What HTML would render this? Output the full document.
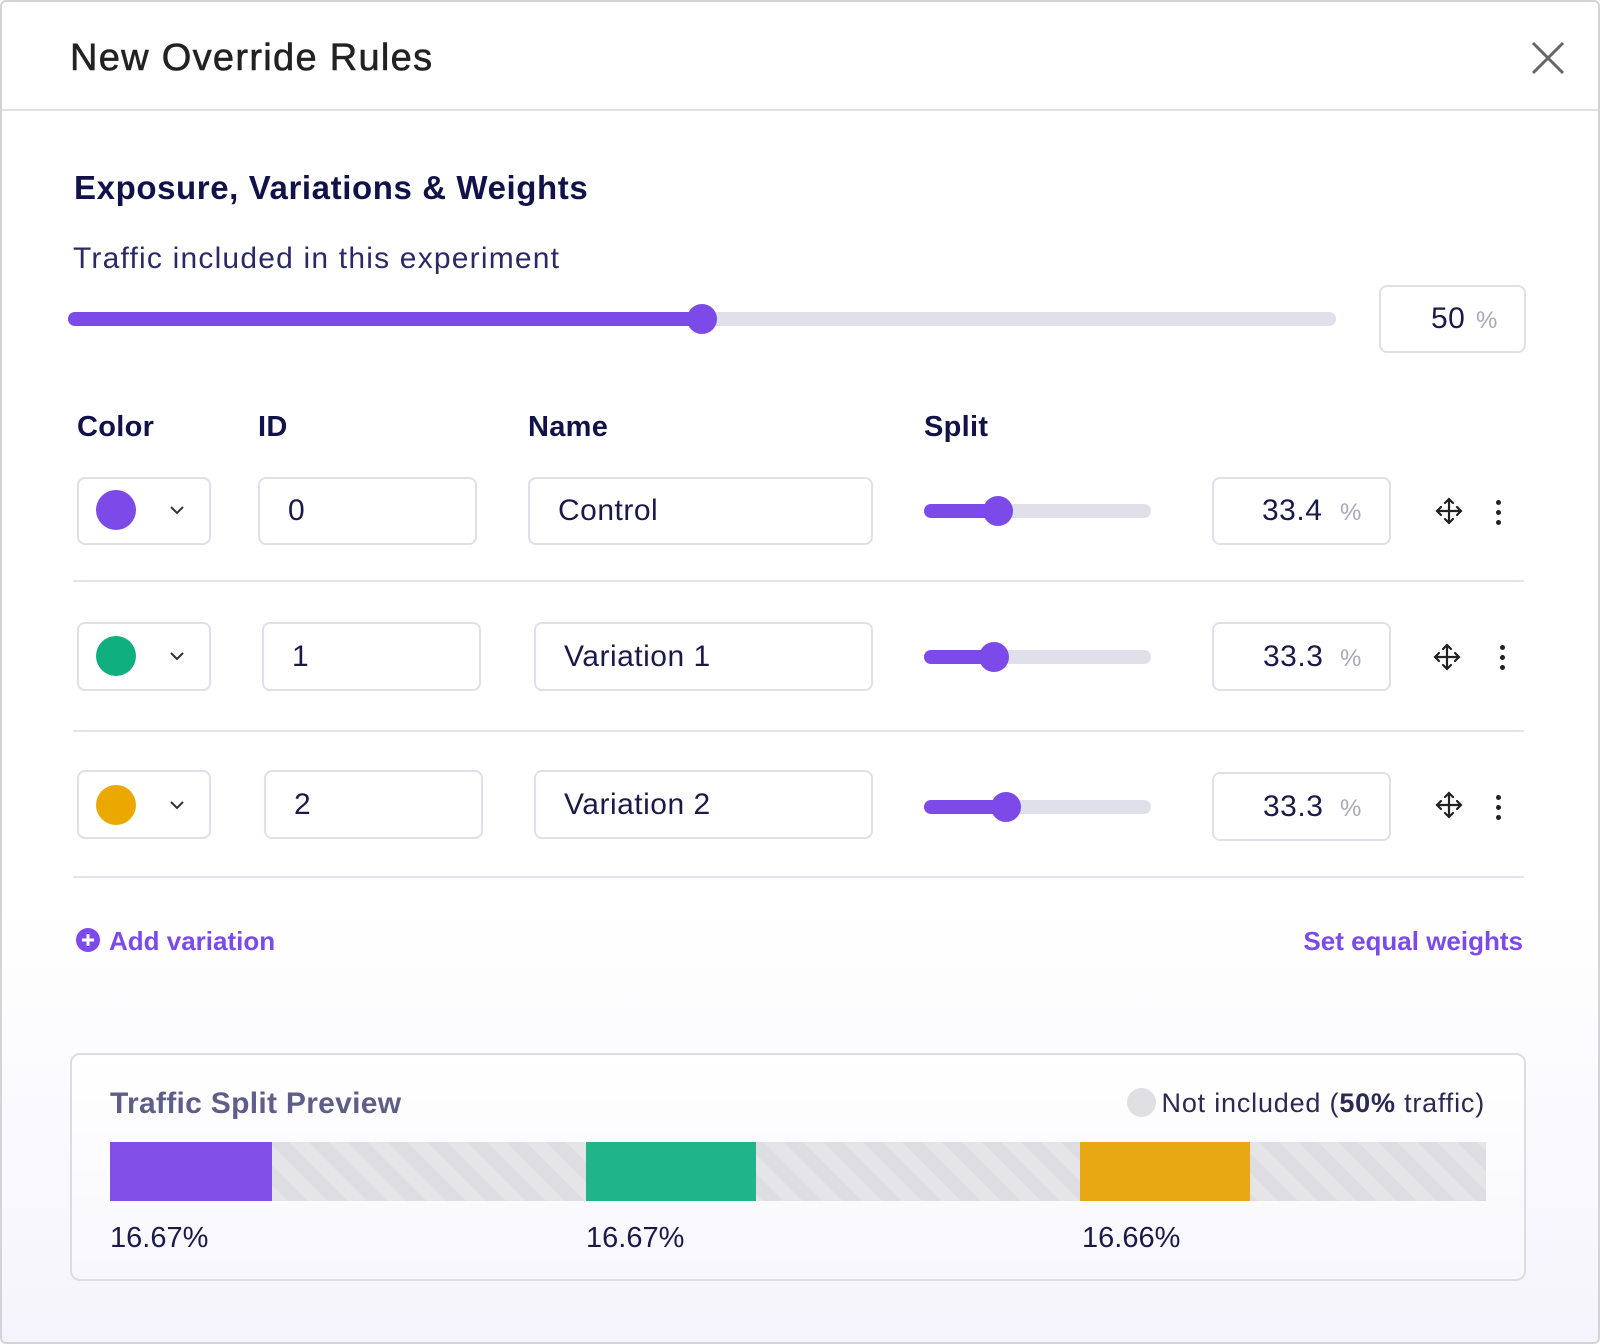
<!DOCTYPE html>
<html><head><meta charset="utf-8"><style>
*{box-sizing:border-box;margin:0;padding:0}
body{width:1600px;height:1344px;background:#fff;font-family:"Liberation Sans",sans-serif;position:relative;overflow:hidden}
.modal{position:absolute;left:0;top:0;width:1600px;height:1344px;border:2px solid #d4d4d8;border-radius:6px;background:linear-gradient(#fff 0,#fff 900px,#f5f4fc 1344px)}
.a{position:absolute}
.t{position:absolute;white-space:nowrap;line-height:1}
.box{position:absolute;border:2px solid #dfe0ec;border-radius:8px;background:#fff}
.track{position:absolute;height:14px;border-radius:7px;background:#dfe0ea}
.fill{position:absolute;left:0;top:0;height:14px;border-radius:7px;background:#7c4ae8}
.thumb{position:absolute;width:30px;height:30px;border-radius:50%;background:#7c4ae8;top:-8px}
.hdr{font-size:29px;font-weight:bold;color:#12124a;letter-spacing:0.3px}
.inp{font-size:30px;color:#1a1a4a;letter-spacing:0.5px}
.pct{font-size:24px;color:#a8a8b8}
.sep{position:absolute;left:73px;width:1451px;height:2px;background:#e2e3ec}
.dots span{display:block;width:5px;height:5px;border-radius:50%;background:#222;margin-bottom:5px}
</style></head><body>
<div class="modal"></div>
<div class="t" style="left:70px;top:39px;font-size:38px;color:#222;letter-spacing:1.3px;-webkit-text-stroke:0.6px #222">New Override Rules</div>
<svg class="a" style="left:1531px;top:41px" width="34" height="34" viewBox="0 0 34 34"><path d="M2 2L32 32M32 2L2 32" stroke="#666" stroke-width="3"/></svg>
<div class="a" style="left:2px;top:109px;width:1596px;height:2px;background:#e0e0e4"></div>

<div class="t" style="left:74px;top:171px;font-size:33px;font-weight:bold;color:#12124a;letter-spacing:0.6px">Exposure, Variations &amp; Weights</div>
<div class="t" style="left:73px;top:244px;font-size:30px;color:#2a2a66;letter-spacing:1.2px">Traffic included in this experiment</div>
<div class="track" style="left:68px;top:312px;width:1268px"><div class="fill" style="width:634px"></div><div class="thumb" style="left:619px"></div></div>
<div class="box" style="left:1379px;top:285px;width:147px;height:68px"></div>
<div class="t inp" style="left:1431px;top:304px">50</div><div class="t pct" style="left:1476px;top:309px">%</div>

<div class="t hdr" style="left:77px;top:413px">Color</div>
<div class="t hdr" style="left:258px;top:413px">ID</div>
<div class="t hdr" style="left:528px;top:413px">Name</div>
<div class="t hdr" style="left:924px;top:413px">Split</div>

<div class="box" style="left:77px;top:477px;width:134px;height:68px"></div>
<div class="a" style="left:96px;top:490px;width:40px;height:40px;border-radius:50%;background:#7c4ae8"></div>
<svg class="a" style="left:170px;top:506px" width="14" height="9"><path d="M1 1L7 7L13 1" stroke="#333" stroke-width="2" fill="none"/></svg>
<div class="box" style="left:258px;top:477px;width:219px;height:68px"></div>
<div class="t inp" style="left:288px;top:496px">0</div>
<div class="box" style="left:528px;top:477px;width:345px;height:68px"></div>
<div class="t inp" style="left:558px;top:496px">Control</div>
<div class="track" style="left:924px;top:504px;width:227px"><div class="fill" style="width:74px"></div><div class="thumb" style="left:59px"></div></div>
<div class="box" style="left:1212px;top:477px;width:179px;height:68px"></div>
<div class="t inp" style="left:1262px;top:496px">33.4</div><div class="t pct" style="left:1340px;top:501px">%</div>

<div class="sep" style="top:580px"></div>
<div class="box" style="left:77px;top:622px;width:134px;height:69px"></div>
<div class="a" style="left:96px;top:636px;width:40px;height:40px;border-radius:50%;background:#10b07e"></div>
<svg class="a" style="left:170px;top:652px" width="14" height="9"><path d="M1 1L7 7L13 1" stroke="#333" stroke-width="2" fill="none"/></svg>
<div class="box" style="left:262px;top:622px;width:219px;height:69px"></div>
<div class="t inp" style="left:292px;top:642px">1</div>
<div class="box" style="left:534px;top:622px;width:339px;height:69px"></div>
<div class="t inp" style="left:564px;top:642px">Variation 1</div>
<div class="track" style="left:924px;top:650px;width:227px"><div class="fill" style="width:70px"></div><div class="thumb" style="left:55px"></div></div>
<div class="box" style="left:1212px;top:622px;width:179px;height:69px"></div>
<div class="t inp" style="left:1263px;top:642px">33.3</div><div class="t pct" style="left:1340px;top:647px">%</div>

<div class="sep" style="top:730px"></div>
<div class="box" style="left:77px;top:770px;width:134px;height:69px"></div>
<div class="a" style="left:96px;top:785px;width:40px;height:40px;border-radius:50%;background:#eaa800"></div>
<svg class="a" style="left:170px;top:801px" width="14" height="9"><path d="M1 1L7 7L13 1" stroke="#333" stroke-width="2" fill="none"/></svg>
<div class="box" style="left:264px;top:770px;width:219px;height:69px"></div>
<div class="t inp" style="left:294px;top:790px">2</div>
<div class="box" style="left:534px;top:770px;width:339px;height:69px"></div>
<div class="t inp" style="left:564px;top:790px">Variation 2</div>
<div class="track" style="left:924px;top:800px;width:227px"><div class="fill" style="width:82px"></div><div class="thumb" style="left:67px"></div></div>
<div class="box" style="left:1212px;top:772px;width:179px;height:69px"></div>
<div class="t inp" style="left:1263px;top:792px">33.3</div><div class="t pct" style="left:1340px;top:797px">%</div>
<div class="sep" style="top:876px"></div>

<svg class="a" style="left:1435px;top:497px" width="28" height="28" viewBox="0 0 28 28"><g stroke="#222" stroke-width="2.2" fill="none" stroke-linecap="round"><path d="M14 2V26M2 14H26M10 6L14 2L18 6M10 22L14 26L18 22M6 10L2 14L6 18M22 10L26 14L22 18"/></g></svg>
<svg class="a" style="left:1433px;top:643px" width="28" height="28" viewBox="0 0 28 28"><g stroke="#222" stroke-width="2.2" fill="none" stroke-linecap="round"><path d="M14 2V26M2 14H26M10 6L14 2L18 6M10 22L14 26L18 22M6 10L2 14L6 18M22 10L26 14L22 18"/></g></svg>
<svg class="a" style="left:1435px;top:791px" width="28" height="28" viewBox="0 0 28 28"><g stroke="#222" stroke-width="2.2" fill="none" stroke-linecap="round"><path d="M14 2V26M2 14H26M10 6L14 2L18 6M10 22L14 26L18 22M6 10L2 14L6 18M22 10L26 14L22 18"/></g></svg>
<div class="a dots" style="left:1496px;top:500px"><span></span><span></span><span></span></div>
<div class="a dots" style="left:1500px;top:645px"><span></span><span></span><span></span></div>
<div class="a dots" style="left:1496px;top:795px"><span></span><span></span><span></span></div>

<svg class="a" style="left:76px;top:928px" width="24" height="24" viewBox="0 0 24 24"><circle cx="12" cy="12" r="12" fill="#7c4ae8"/><path d="M12 6V18M6 12H18" stroke="#fff" stroke-width="3"/></svg>
<div class="t" style="left:109px;top:928px;font-size:26px;font-weight:bold;color:#7c4ae8">Add variation</div>
<div class="t" style="right:77px;top:928px;font-size:26px;font-weight:bold;color:#7c4ae8">Set equal weights</div>

<div class="a" style="left:70px;top:1053px;width:1456px;height:228px;border:2px solid #dcdce2;border-radius:10px;background:linear-gradient(#fff,#f8f7fc)"></div>
<div class="t" style="left:110px;top:1089px;font-size:30px;font-weight:bold;color:#5e5e88;letter-spacing:0.3px">Traffic Split Preview</div>
<div class="a" style="left:1127px;top:1088px;width:29px;height:29px;border-radius:50%;background:#e0e0e4"></div>
<div class="t" style="right:115px;top:1090px;font-size:27px;color:#2a2a55;letter-spacing:0.8px">Not included (<b>50%</b> traffic)</div>
<div class="a" style="left:110px;top:1142px;width:1376px;height:59px;background:repeating-linear-gradient(45deg,#e5e5e7 0 14px,#dedee2 14px 28px)"></div>
<div class="a" style="left:110px;top:1142px;width:162px;height:59px;background:#8250e8"></div>
<div class="a" style="left:586px;top:1142px;width:170px;height:59px;background:#1fb48a"></div>
<div class="a" style="left:1080px;top:1142px;width:170px;height:59px;background:#e8a814"></div>
<div class="t" style="left:110px;top:1224px;font-size:29px;color:#1a1a4a">16.67%</div>
<div class="t" style="left:586px;top:1224px;font-size:29px;color:#1a1a4a">16.67%</div>
<div class="t" style="left:1082px;top:1224px;font-size:29px;color:#1a1a4a">16.66%</div>
</body></html>
